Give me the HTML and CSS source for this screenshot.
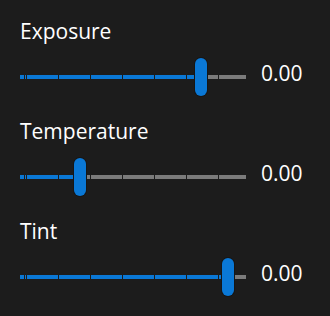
FILE: index.html
```html
<!DOCTYPE html>
<html>
<head>
<meta charset="utf-8">
<link rel="stylesheet" href="styles.css">
</head>
<body>
<div class="panel">
  <div class="setting">
    <div class="label">Exposure</div>
    <div class="slider-row">
      <div class="slider">
        <div class="track">
          <div class="fill" style="width:181px"></div>
          <div class="ticks"></div>
        </div>
        <div class="thumb" style="left:175px"></div>
      </div>
      <span class="value">0.00</span>
    </div>
  </div>
  <div class="setting">
    <div class="label">Temperature</div>
    <div class="slider-row">
      <div class="slider">
        <div class="track">
          <div class="fill" style="width:60px"></div>
          <div class="ticks"></div>
        </div>
        <div class="thumb" style="left:54px"></div>
      </div>
      <span class="value">0.00</span>
    </div>
  </div>
  <div class="setting">
    <div class="label">Tint</div>
    <div class="slider-row">
      <div class="slider">
        <div class="track">
          <div class="fill" style="width:208px"></div>
          <div class="ticks"></div>
        </div>
        <div class="thumb" style="left:202px"></div>
      </div>
      <span class="value">0.00</span>
    </div>
  </div>
</div>
</body>
</html>
```
FILE: styles.css
```css
html, body {
  margin: 0;
  padding: 0;
  background: #1c1c1c;
}
body {
  width: 330px;
  height: 316px;
  overflow: hidden;
  font-family: "Open Sans", "Noto Sans", sans-serif;
  color: #ffffff;
}
.panel {
  display: flex;
  flex-direction: column;
  padding-left: 20px;
}
.setting {
  height: 100px;
  box-sizing: border-box;
  padding-top: 17px;
  display: flex;
  flex-direction: column;
}
.label {
  font-size: 21px;
  line-height: 28px;
}
.slider-row {
  margin-top: 13px;
  height: 38px;
  display: flex;
  align-items: center;
  gap: 15px;
}
.slider {
  position: relative;
  width: 226px;
  height: 38px;
  display: flex;
  align-items: center;
}
.track {
  position: relative;
  width: 100%;
  height: 4px;
  background: #7b7b7b;
}
.fill {
  height: 100%;
  background: #0a78d6;
}
.ticks {
  position: absolute;
  inset: 0;
  background-image: repeating-linear-gradient(90deg, #1c1c1c 0 1px, transparent 1px 32px);
  background-position: 6px 0;
}
.thumb {
  position: absolute;
  top: 0;
  width: 12px;
  height: 38px;
  border-radius: 6px;
  background: #0a78d6;
  box-shadow: 0 0 0 1px #161616;
}
.value {
  align-self: flex-start;
  margin-top: 1px;
  font-size: 21px;
  line-height: 28px;
}
```
